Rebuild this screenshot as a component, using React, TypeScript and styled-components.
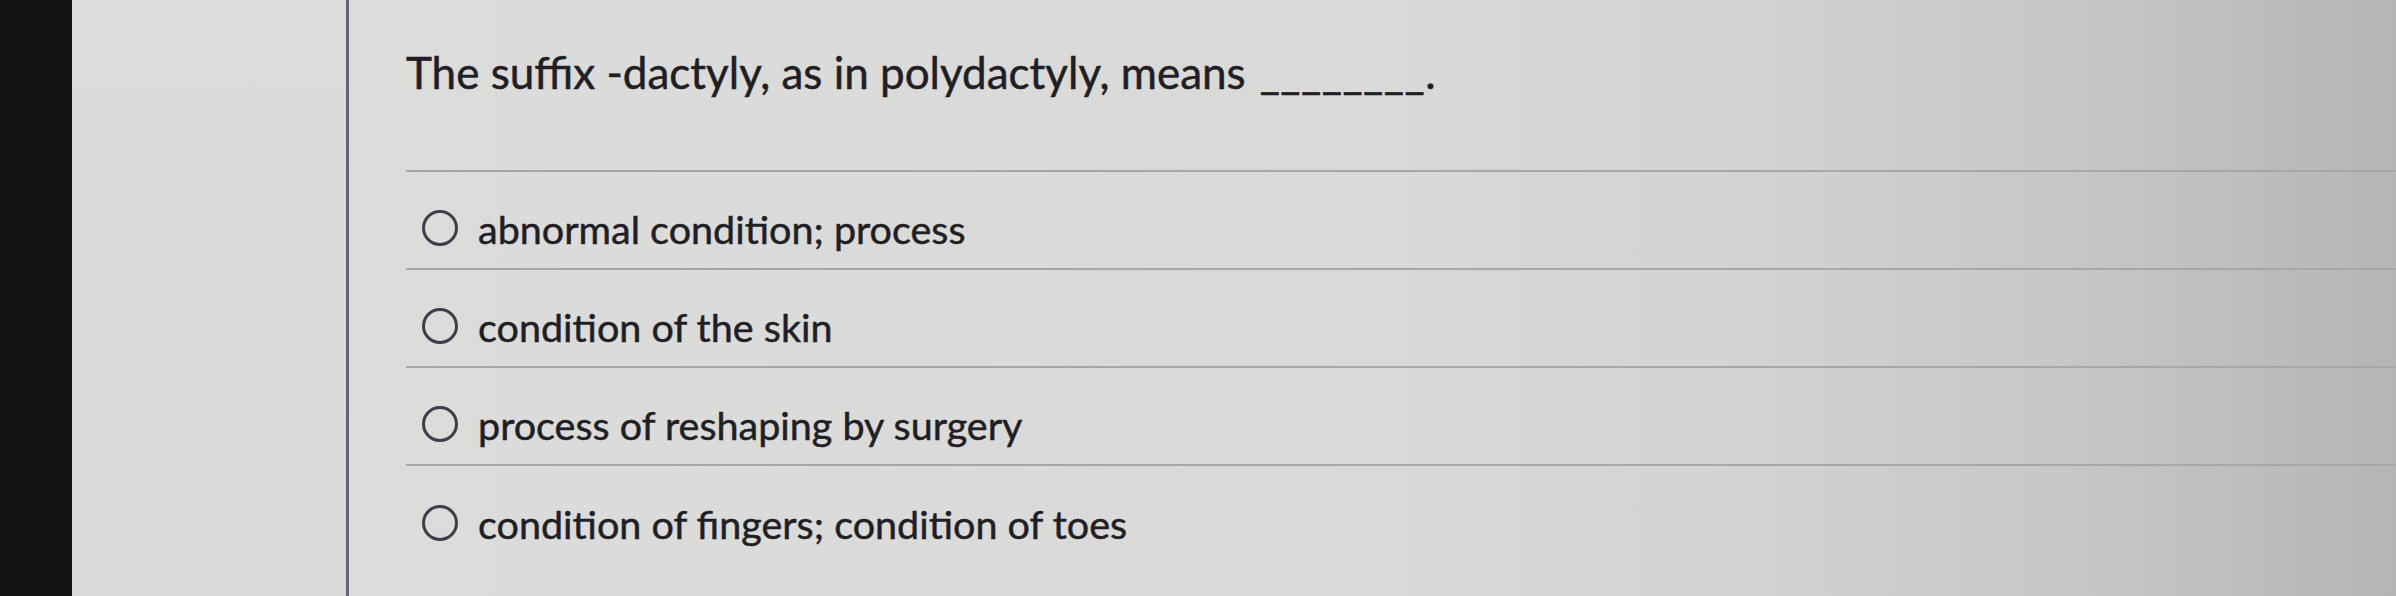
import React from "react";
import styled, { createGlobalStyle } from "styled-components";

const Global = createGlobalStyle`
  html, body {
    margin: 0;
    padding: 0;
    width: 2396px;
    height: 596px;
    overflow: hidden;
    background: #dcdcda;
  }
  * { box-sizing: border-box; }
`;

const Screen = styled.div`
  display: flex;
  width: 2396px;
  height: 596px;
  font-family: Lato, "Open Sans", sans-serif;
`;

const Bezel = styled.div`
  width: 72px;
  flex: none;
  background: #131313;
`;

const SidePanel = styled.aside`
  width: 277px;
  flex: none;
  background: linear-gradient(180deg, #dcdcda 0%, #d9d9d7 100%);
  border-right: 3px solid #62647a;
`;

const Main = styled.main`
  flex: 1;
  display: flex;
  flex-direction: column;
  padding: 46px 0 0 57px;
  background: linear-gradient(
    90deg,
    #dcdcda 0%,
    #d9d9d7 50%,
    #d3d3d2 68%,
    #c5c5c6 86%,
    #b5b5b7 100%
  );
`;

const Question = styled.div`
  font-size: 44px;
  line-height: 52px;
  color: #1f1f25;
  -webkit-text-stroke: 0.5px #1f1f25;
  padding-bottom: 72px;
  border-bottom: 2px solid #a7a7a7;
`;

const Blank = styled.span`
  margin-left: 14px;
  letter-spacing: 0.5px;
`;

const Options = styled.div`
  display: flex;
  flex-direction: column;
`;

const Option = styled.label<{ $last?: boolean }>`
  display: flex;
  align-items: center;
  gap: 20px;
  height: 98px;
  padding: 16px 0 0 16px;
  border-bottom: ${(p) => (p.$last ? "none" : "2px solid #a7a7a7")};
  font-size: 39.5px;
  color: #1f1f25;
  -webkit-text-stroke: 0.5px #1f1f25;
`;

const Radio = styled.span`
  width: 36px;
  height: 36px;
  flex: none;
  border-radius: 50%;
  border: 3px solid #3e3e4a;
  background: transparent;
`;

const options = [
  "abnormal condition; process",
  "condition of the skin",
  "process of reshaping by surgery",
  "condition of fingers; condition of toes",
];

export default function App() {
  return (
    <>
      <Global />
      <Screen>
        <Bezel />
        <SidePanel />
        <Main>
          <Question>
            The suffix -dactyly, as in polydactyly, means
            <Blank>________.</Blank>
          </Question>
          <Options>
            {options.map((o, i) => (
              <Option key={o} $last={i === options.length - 1}>
                <Radio />
                {o}
              </Option>
            ))}
          </Options>
        </Main>
      </Screen>
    </>
  );
}
